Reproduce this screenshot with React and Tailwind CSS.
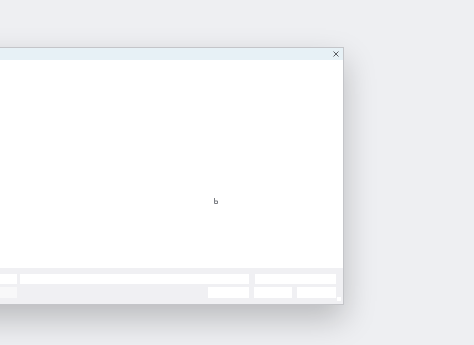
import React from "react";

export default function App() {
  return (
    <div className="relative w-[474px] h-[345px] overflow-hidden bg-[#eeeff2]">
      {/* dialog window, its left side runs off the page */}
      <div className="absolute left-[-157px] top-[47px] w-[501px] h-[258px] flex flex-col bg-white border border-[#c4c5c9] shadow-[0_14px_30px_rgba(0,0,0,0.22)]">
        <div className="h-[12px] bg-[#e7f1f6] flex items-center justify-end pr-[4px] shrink-0">
          <svg width="6" height="6" viewBox="0 0 6 6" className="text-[#5a5d62]">
            <path d="M0.5 0.5 L5.5 5.5 M5.5 0.5 L0.5 5.5" stroke="currentColor" strokeWidth="1" />
          </svg>
        </div>
        <div className="flex-1 relative">
          <svg
            width="4"
            height="6"
            viewBox="0 0 4 6"
            className="absolute left-[370px] top-[138px] text-[#7a7d82]"
          >
            <path d="M0.5 0 V5.5 H3.5 V3 H1" stroke="currentColor" strokeWidth="1" fill="none" />
          </svg>
        </div>
        <div className="h-[36px] bg-[#f0f0f3] flex flex-col gap-[3px] pt-[6px] pr-[7px] pl-[4px] shrink-0 relative">
          <div className="flex gap-[3px] h-[10px]">
            <div className="w-[169px] bg-white" />
            <div className="flex-1 bg-white" />
            <div className="w-[81px] ml-[3px] bg-white" />
          </div>
          <div className="flex gap-[5px] h-[11px] justify-end">
            <div className="w-[169px] bg-white/50 mr-auto" />
            <div className="w-[41px] bg-white" />
            <div className="w-[38px] bg-white" />
            <div className="w-[39px] bg-white" />
          </div>
          <div className="absolute right-[2px] bottom-[3px] w-[4px] h-[4px] bg-white" />
        </div>
      </div>
    </div>
  );
}
